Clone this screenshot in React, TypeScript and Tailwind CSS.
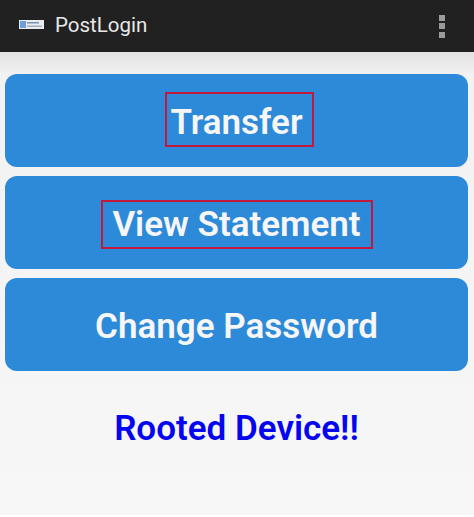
import React from 'react';

function ActionButton({ label, boxClass }: { label: string; boxClass?: string }) {
  return (
    <button
      type="button"
      className="relative flex h-[93px] w-full items-center justify-center rounded-[12px] bg-[#2d8ad8] pt-[4px] text-[35px] font-semibold leading-none text-[#f6f6f6]"
    >
      {label}
      {boxClass && <span className={`absolute border-2 border-[#c2183c] ${boxClass}`} />}
    </button>
  );
}

export default function App() {
  return (
    <div className="flex h-[517px] w-[474px] flex-col overflow-hidden bg-white font-['Roboto',sans-serif]">
      <header className="flex h-[52px] shrink-0 items-center bg-[#212121]">
        <svg width="25" height="9" viewBox="0 0 25 9" className="ml-[19px] mt-[-4px]">
          <rect width="25" height="9" fill="#e9ecef" />
          <rect x="1" y="1" width="6" height="7" fill="#6f9fd6" />
          <rect x="8" y="2" width="12" height="1.5" fill="#7d92b0" />
          <rect x="8" y="5.5" width="15" height="1.5" fill="#a3adbd" />
        </svg>
        <span className="ml-[11px] mt-[-2px] text-[20.5px] leading-none text-[#e8e8e8]">PostLogin</span>
        <div className="ml-auto mr-[29px] flex flex-col gap-[2.5px]">
          <span className="h-[6px] w-[6px] bg-[#9a9a9a]" />
          <span className="h-[6px] w-[6px] bg-[#9a9a9a]" />
          <span className="h-[6px] w-[6px] bg-[#9a9a9a]" />
        </div>
      </header>
      <main className="flex h-[463px] flex-col bg-gradient-to-b from-[#e2e2e2] from-0% via-[#f2f2f2] via-[5%] to-[#f7f7f7] pl-[5px] pr-[6px] pt-[22px]">
        <div className="flex flex-col gap-[9px]">
          <ActionButton label="Transfer" boxClass="left-[160px] top-[18px] h-[55px] w-[149px]" />
          <ActionButton label="View Statement" boxClass="left-[96px] top-[24px] h-[49px] w-[272px]" />
          <ActionButton label="Change Password" />
        </div>
        <p className="mt-[40px] text-center text-[35px] font-semibold leading-none text-[#0505f0]">Rooted Device!!</p>
      </main>
    </div>
  );
}
